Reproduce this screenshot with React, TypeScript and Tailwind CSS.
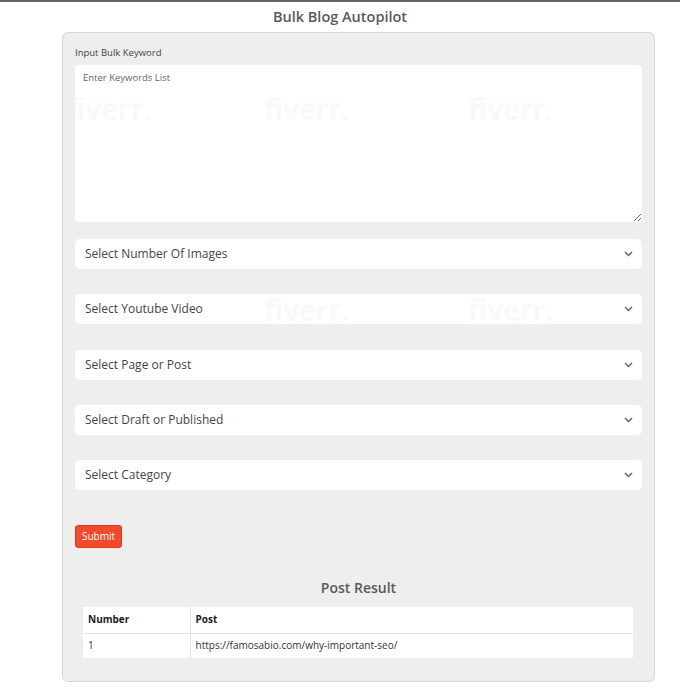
import React from "react";

const selects = [
  "Select Number Of Images",
  "Select Youtube Video",
  "Select Page or Post",
  "Select Draft or Published",
  "Select Category",
];

// faint "fiverr." watermark over the page
const marks = [
  { top: 84, left: 66 },
  { top: 84, left: 264 },
  { top: 84, left: 468 },
  { top: 285, left: 264 },
  { top: 285, left: 468 },
  { top: 489, left: 264 },
  { top: 489, left: 468 },
];

function Chevron() {
  return (
    <svg width="9" height="6" viewBox="0 0 9 6" className="shrink-0">
      <path d="M1 1l3.5 3.5L8 1" fill="none" stroke="#666" strokeWidth="1.5" />
    </svg>
  );
}

export default function App() {
  return (
    <div
      className="relative min-h-[689px] w-[680px] overflow-hidden border-t-2 border-[#666] bg-white text-[#333]"
      style={{ fontFamily: '"Open Sans", "Noto Sans", sans-serif' }}
    >
      <h1 className="flex h-[30px] items-center justify-center text-[14.5px] font-semibold text-[#5a5a5a]">
        Bulk Blog Autopilot
      </h1>

      <div className="ml-[62px] w-[593px] rounded-[6px] border border-[#d6d6d6] bg-[#eeeeee] px-[12px] pt-[12px] pb-[23px]">
        <label className="block text-[9.5px] leading-[15px] text-[#444]">Input Bulk Keyword</label>
        <textarea
          placeholder="Enter Keywords List"
          className="mt-[5px] block h-[157px] w-full resize-y rounded-[4px] bg-white px-[8px] py-[5px] text-[9.5px] leading-[15px] text-[#555] outline-none placeholder:text-[#666]"
        />

        <div className="mt-[17px] flex flex-col gap-[25.3px]">
          {selects.map((s) => (
            <div
              key={s}
              className="flex h-[30px] items-center justify-between rounded-[5px] bg-white pl-[10px] pr-[9px] text-[12px] text-[#444]"
            >
              <span>{s}</span>
              <Chevron />
            </div>
          ))}
        </div>

        <button className="mt-[35px] flex h-[23px] w-[47px] items-center justify-center rounded-[3px] border border-[#dd3a20] bg-[#f44a2c] text-[10px] text-white">
          Submit
        </button>

        <h2 className="mt-[30px] text-center text-[14px] font-semibold leading-[20px] text-[#5a5a5a]">
          Post Result
        </h2>

        <table className="mx-[8px] mt-[9px] w-[550px] border-collapse bg-white text-[10px] text-[#333]">
          <thead>
            <tr className="h-[26px] border-b border-[#e4e4e4]">
              <th className="w-[107px] border-r border-[#e4e4e4] pl-[5px] text-left font-bold text-[#222]">
                Number
              </th>
              <th className="pl-[5px] text-left font-bold text-[#222]">Post</th>
            </tr>
          </thead>
          <tbody>
            <tr className="h-[25px]">
              <td className="border-r border-[#e4e4e4] pl-[5px]">1</td>
              <td className="pl-[5px]">https://famosabio.com/why-important-seo/</td>
            </tr>
          </tbody>
        </table>
      </div>

      {marks.map((m, i) => (
        <span
          key={i}
          aria-hidden="true"
          className="pointer-events-none absolute text-[30px] font-bold tracking-[-1px] text-white/40"
          style={{ top: m.top, left: m.left, textShadow: "0 0 1px rgba(0,0,0,0.04)" }}
        >
          fiverr.
        </span>
      ))}
    </div>
  );
}
